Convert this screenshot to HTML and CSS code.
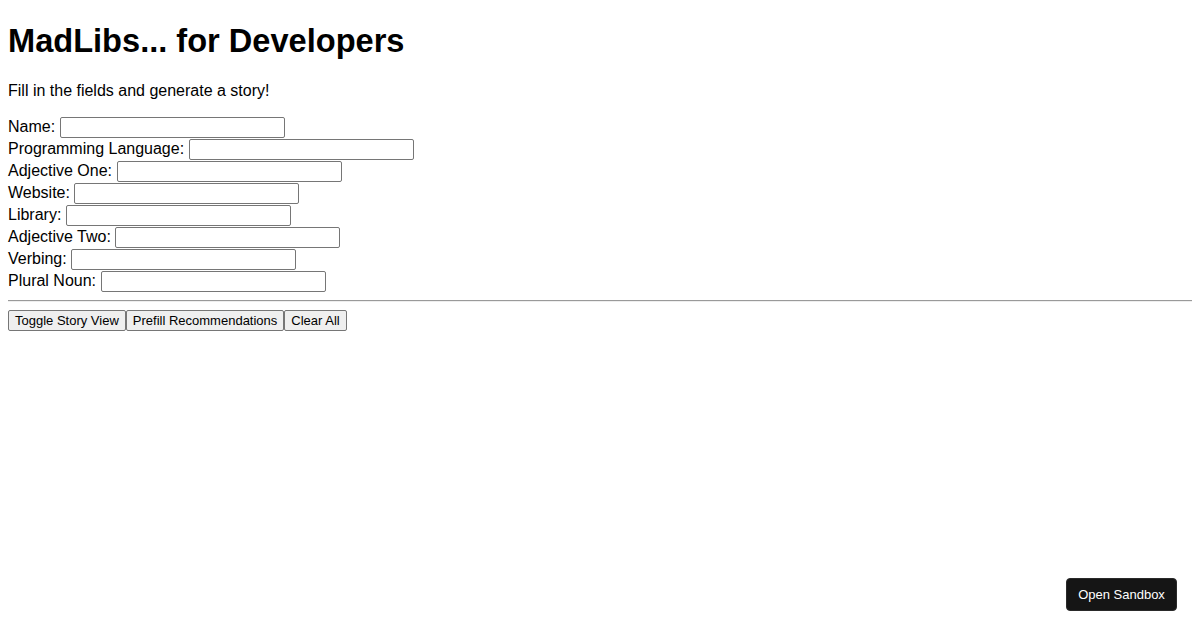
FILE: index.html
```html
<!DOCTYPE html>
<html>
<head>
<meta charset="utf-8">
<link rel="stylesheet" href="styles.css">
</head>
<body class="page">
  <h1 class="title">MadLibs... for Developers</h1>
  <p class="intro">Fill in the fields and generate a story!</p>
  <form class="fields">
    <label class="field">Name: <input class="text-input" type="text"></label>
    <label class="field">Programming Language: <input class="text-input" type="text"></label>
    <label class="field">Adjective One: <input class="text-input" type="text"></label>
    <label class="field">Website: <input class="text-input" type="text"></label>
    <label class="field">Library: <input class="text-input" type="text"></label>
    <label class="field">Adjective Two: <input class="text-input" type="text"></label>
    <label class="field">Verbing: <input class="text-input" type="text"></label>
    <label class="field">Plural Noun: <input class="text-input" type="text"></label>
  </form>
  <hr class="divider">
  <div class="actions"><button class="btn" type="button">Toggle Story View</button><button class="btn" type="button">Prefill Recommendations</button><button class="btn" type="button">Clear All</button></div>
  <a class="sandbox-btn">Open Sandbox</a>
</body>
</html>
```
FILE: styles.css
```css
html, body {
  background: #fff;
}
.page {
  margin: 0;
  padding: 8px;
  font-family: "Liberation Sans", Arial, sans-serif;
  font-size: 16px;
  color: #000;
}
.title {
  font-size: 32.6px;
  font-weight: bold;
  margin: 14px 0 22px;
}
.intro {
  margin: 0 0 16px;
}
.fields {
  margin: 0;
  display: flex;
  flex-direction: column;
  align-items: flex-start;
}
.field {
  display: block;
  height: 22px;
  line-height: 22px;
}
.text-input {
  font-family: "Liberation Sans", Arial, sans-serif;
  font-size: 13.333px;
  width: 225px;
  height: 21px;
  box-sizing: border-box;
  padding: 1px 2px;
  border: 1px solid #767676;
  border-radius: 2px;
  background: #fff;
  margin: 0;
  vertical-align: baseline;
}
.divider {
  margin: 8px 0 8px;
  border: 0;
  border-top: 1px solid #9a9a9a;
  border-bottom: 1px solid #eee;
  height: 0;
}
.actions {
  display: flex;
}
.btn {
  font-family: "Liberation Sans", Arial, sans-serif;
  font-size: 13px;
  color: #000;
  background: #efefef;
  border: 1px solid #767676;
  border-radius: 2px;
  padding: 1px 6px;
  height: 21px;
  margin: 0;
}
.sandbox-btn {
  position: fixed;
  right: 23px;
  bottom: 19px;
  width: 111px;
  height: 33px;
  box-sizing: border-box;
  display: flex;
  align-items: center;
  justify-content: center;
  background: #151515;
  color: #fff;
  border: 1px solid #2a2a2a;
  border-radius: 4px;
  font-family: "Liberation Sans", Arial, sans-serif;
  font-size: 13px;
}
```
